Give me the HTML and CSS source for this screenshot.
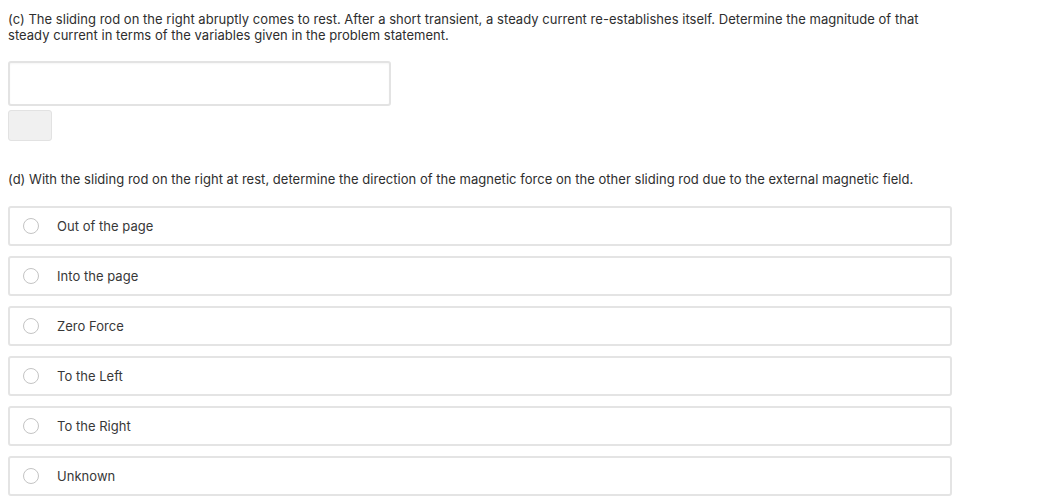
FILE: index.html
```html
<!DOCTYPE html>
<html>
<head>
<meta charset="utf-8">
<link rel="stylesheet" href="styles.css">
</head>
<body>
<div class="page">
  <p class="prompt">(c) The sliding rod on the right abruptly comes to rest. After a short transient, a steady current re-establishes itself. Determine the magnitude of that steady current in terms of the variables given in the problem statement.</p>
  <div class="answer-input"></div>
  <div class="answer-btn"></div>
  <p class="prompt prompt-d">(d) With the sliding rod on the right at rest, determine the direction of the magnetic force on the other sliding rod due to the external magnetic field.</p>
  <div class="options">
    <label class="option"><span class="radio"></span><span class="opt-text">Out of the page</span></label>
    <label class="option"><span class="radio"></span><span class="opt-text">Into the page</span></label>
    <label class="option"><span class="radio"></span><span class="opt-text">Zero Force</span></label>
    <label class="option"><span class="radio"></span><span class="opt-text">To the Left</span></label>
    <label class="option"><span class="radio"></span><span class="opt-text">To the Right</span></label>
    <label class="option"><span class="radio"></span><span class="opt-text">Unknown</span></label>
  </div>
</div>
</body>
</html>
```

FILE: styles.css
```css
html, body {
  margin: 0;
  padding: 0;
  background: #ffffff;
}
body {
  font-family: Inter, "Liberation Sans", sans-serif;
  font-size: 13px;
  color: #2e2e2e;
  letter-spacing: 0.03px;
}
.page {
  padding: 0 8px;
}
.prompt {
  margin: 11px 0 0;
  line-height: 16px;
  width: 935px;
}
.answer-input {
  margin-top: 18px;
  width: 379px;
  height: 41px;
  border: 2px solid #e3e3e3;
  border-radius: 3px;
  box-shadow: inset 0 1px 2px rgba(0,0,0,0.04);
  background: #fff;
}
.answer-btn {
  margin-top: 4px;
  width: 42px;
  height: 29px;
  border: 1px solid #e2e2e2;
  border-radius: 3px;
  background: #f0f0f0;
}
.prompt-d {
  margin-top: 30px;
  width: auto;
}
.options {
  margin-top: 19px;
  display: flex;
  flex-direction: column;
  gap: 10px;
  width: 944px;
}
.option {
  display: flex;
  align-items: center;
  height: 36px;
  border: 2px solid #e4e4e4;
  border-radius: 3px;
  padding-left: 13px;
  color: #383838;
}
.radio {
  width: 14px;
  height: 14px;
  border: 1px solid #c4c4c4;
  border-radius: 50%;
  background: #fff;
  flex: none;
}
.opt-text {
  margin-left: 18px;
}
```
